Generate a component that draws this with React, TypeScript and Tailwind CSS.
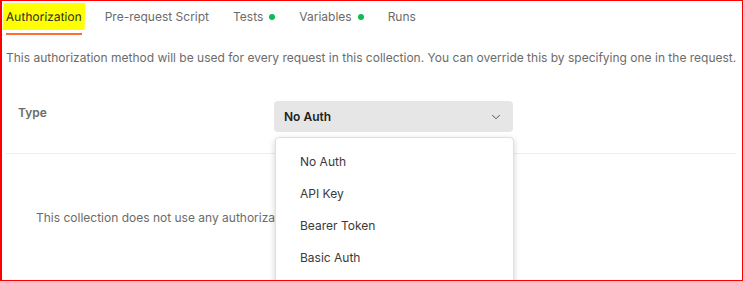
import React from 'react';
import { ChevronDown } from 'lucide-react';

const tabs = [
  { label: 'Pre-request Script', dot: false },
  { label: 'Tests', dot: true },
  { label: 'Variables', dot: true },
  { label: 'Runs', dot: false },
];

const authTypes = ['No Auth', 'API Key', 'Bearer Token', 'Basic Auth'];

export default function App() {
  return (
    <div
      className="w-[743px] h-[281px] overflow-hidden bg-white border-t border-b border-r border-l-2 border-[#ff0000] relative"
      style={{ fontFamily: 'Inter, "Noto Sans", sans-serif' }}
    >
      {/* Tabs */}
      <div className="flex items-end h-[34px] pl-[1px] gap-[24px] text-[12px] text-[#6b6b6b]">
        <div className="relative h-full flex flex-col justify-end -mr-[4px]">
          <span className="bg-[#ffff00] text-[#2b2b2b] px-[3px] pb-[6px] pt-[7px] mb-[3px] leading-[14px] -skew-x-2">Authorization</span>
          <div className="h-[2px] bg-[#ff6c37] mx-[3px]" />
        </div>
        {tabs.map((t) => (
          <div key={t.label} className="flex gap-[6px] h-full pb-[11px] items-end leading-[14px]">
            <span>{t.label}</span>
            {t.dot && <span className="w-[6px] h-[6px] rounded-full bg-[#0cbb52] mb-[4px]" />}
          </div>
        ))}
      </div>

      {/* Description */}
      <p className="mt-[15px] pl-[4px] text-[12px] text-[#6b6b6b] leading-[16px] whitespace-nowrap">
        This authorization method will be used for every request in this collection. You can override this by specifying one in the request.
      </p>

      {/* Type row */}
      <div className="flex mt-[35px] pl-[16px] h-[32px]">
        <div className="w-[256px] text-[12px] font-semibold text-[#6b6b6b] pt-[3px]">Type</div>
        <div className="w-[239px] h-[31px] rounded-[4px] bg-[#e6e6e6] flex items-center justify-between px-[10px] text-[12px] font-semibold text-[#212121]">
          <span>No Auth</span>
          <ChevronDown size={14} strokeWidth={1.5} className="text-[#3a3a3a]" />
        </div>
      </div>

      <div className="mt-[20px] ml-[4px] mr-[6px] h-px bg-[#ededed]" />

      <p className="mt-[56px] pl-[34px] text-[12px] text-[#6b6b6b] leading-[16px] whitespace-nowrap">
        This collection does not use any authorization.
      </p>

      {/* Dropdown menu */}
      <div className="absolute left-[273px] top-[136px] w-[239px] h-[160px] bg-white border border-[#e0e0e0] rounded-[4px] shadow-[0_2px_6px_rgba(0,0,0,0.18)] pt-[8px]">
        {authTypes.map((a) => (
          <div key={a} className="h-[32px] flex items-center pl-[24px] text-[12px] text-[#3a3a3a]">
            {a}
          </div>
        ))}
      </div>
    </div>
  );
}
